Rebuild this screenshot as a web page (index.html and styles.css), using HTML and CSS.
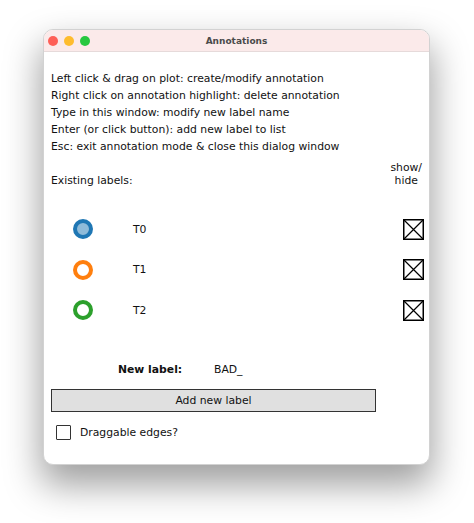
FILE: index.html
```html
<!DOCTYPE html>
<html>
<head>
<meta charset="utf-8">
<link rel="stylesheet" href="styles.css">
</head>
<body>
<div class="stage">
<div class="window">
  <div class="titlebar">
    <div class="lights">
      <span class="light red"></span>
      <span class="light yellow"></span>
      <span class="light green"></span>
    </div>
    <div class="title">Annotations</div>
  </div>
  <div class="content">
    <div class="help">
      <div>Left click &amp; drag on plot: create/modify annotation</div>
      <div>Right click on annotation highlight: delete annotation</div>
      <div>Type in this window: modify new label name</div>
      <div>Enter (or click button): add new label to list</div>
      <div>Esc: exit annotation mode &amp; close this dialog window</div>
    </div>
    <div class="header">
      <div class="existing">Existing labels:</div>
      <div class="showhide">show/<br>hide</div>
    </div>
    <div class="labels">
      <div class="row">
        <span class="dot blue"></span>
        <span class="name">T0</span>
        <span class="xbox"><svg width="21" height="21" viewBox="0 0 21 21"><rect x="0.75" y="0.75" width="19.5" height="19.5" fill="none" stroke="#000" stroke-width="1.5"/><path d="M1 1L20 20M20 1L1 20" stroke="#000" stroke-width="1.2"/></svg></span>
      </div>
      <div class="row">
        <span class="dot orange"></span>
        <span class="name">T1</span>
        <span class="xbox"><svg width="21" height="21" viewBox="0 0 21 21"><rect x="0.75" y="0.75" width="19.5" height="19.5" fill="none" stroke="#000" stroke-width="1.5"/><path d="M1 1L20 20M20 1L1 20" stroke="#000" stroke-width="1.2"/></svg></span>
      </div>
      <div class="row">
        <span class="dot green-dot"></span>
        <span class="name">T2</span>
        <span class="xbox"><svg width="21" height="21" viewBox="0 0 21 21"><rect x="0.75" y="0.75" width="19.5" height="19.5" fill="none" stroke="#000" stroke-width="1.5"/><path d="M1 1L20 20M20 1L1 20" stroke="#000" stroke-width="1.2"/></svg></span>
      </div>
    </div>
    <div class="newlabel">
      <span class="nl-key">New label:</span>
      <span class="nl-val">BAD_</span>
    </div>
    <div class="addbtn">Add new label</div>
    <div class="drag">
      <span class="cb"></span>
      <span>Draggable edges?</span>
    </div>
  </div>
</div>
</div>
</body>
</html>
```

FILE: styles.css
```css
html, body {
  margin: 0;
  padding: 0;
  background: #ffffff;
}
body {
  font-family: "DejaVu Sans", sans-serif;
  font-size: 10.8px;
  color: #111;
}
.stage {
  min-height: 523px;
  padding: 29px 0 0 43px;
  box-sizing: border-box;
}
.window {
  width: 387px;
  height: 436px;
  background: #fff;
  border-radius: 10px;
  border: 1px solid #d2d2d2;
  box-sizing: border-box;
  box-shadow: 0 18px 36px 2px rgba(0, 0, 0, 0.38);
  display: flex;
  flex-direction: column;
}
.titlebar {
  height: 22px;
  background: #fbeaea;
  border-bottom: 1px solid #e6dada;
  border-radius: 9px 9px 0 0;
  display: flex;
  align-items: center;
  box-sizing: border-box;
}
.lights {
  display: flex;
  gap: 6px;
  padding-left: 4px;
}
.light {
  width: 10px;
  height: 10px;
  border-radius: 50%;
  display: block;
}
.red { background: #fe5f57; }
.yellow { background: #febc2e; }
.green { background: #28c840; }
.title {
  flex: 1;
  text-align: center;
  font-weight: bold;
  font-size: 9px;
  color: #4a4a4a;
  margin-right: 46px;
}
.content {
  padding: 18px 5px 0 7px;
  display: flex;
  flex-direction: column;
}
.help {
  line-height: 17px;
}
.header {
  margin-top: 6px;
  display: flex;
  justify-content: space-between;
  align-items: flex-end;
}
.existing {
  line-height: 13px;
}
.showhide {
  line-height: 13px;
  text-align: center;
  margin-right: 2px;
}
.labels {
  margin-top: 22px;
  display: flex;
  flex-direction: column;
}
.row {
  height: 40.5px;
  display: flex;
  align-items: center;
}
.dot {
  width: 20px;
  height: 20px;
  box-sizing: border-box;
  border-radius: 50%;
  border: 4px solid;
  margin-left: 22px;
  background: #fff;
}
.dot.blue { border-color: #1f77b4; background: #8fbbd9; }
.dot.orange { border-color: #ff7f0e; }
.dot.green-dot { border-color: #2ca02c; }
.name {
  margin-left: 40px;
  flex: 1;
}
.xbox {
  display: block;
  width: 21px;
  height: 21px;
}
.xbox svg { display: block; }
.newlabel {
  margin-top: 29px;
  display: flex;
  line-height: 20px;
}
.nl-key {
  font-weight: bold;
  margin-left: 67px;
  width: 96px;
}
.addbtn {
  margin-top: 9px;
  width: 325px;
  height: 23px;
  box-sizing: border-box;
  border: 1px solid #333;
  background: #e0e0e0;
  text-align: center;
  line-height: 21px;
}
.drag {
  margin-top: 13px;
  display: flex;
  align-items: center;
  gap: 9px;
  margin-left: 5px;
}
.cb {
  width: 15px;
  height: 15px;
  box-sizing: border-box;
  border: 1.5px solid #333;
  border-radius: 1px;
}
```
